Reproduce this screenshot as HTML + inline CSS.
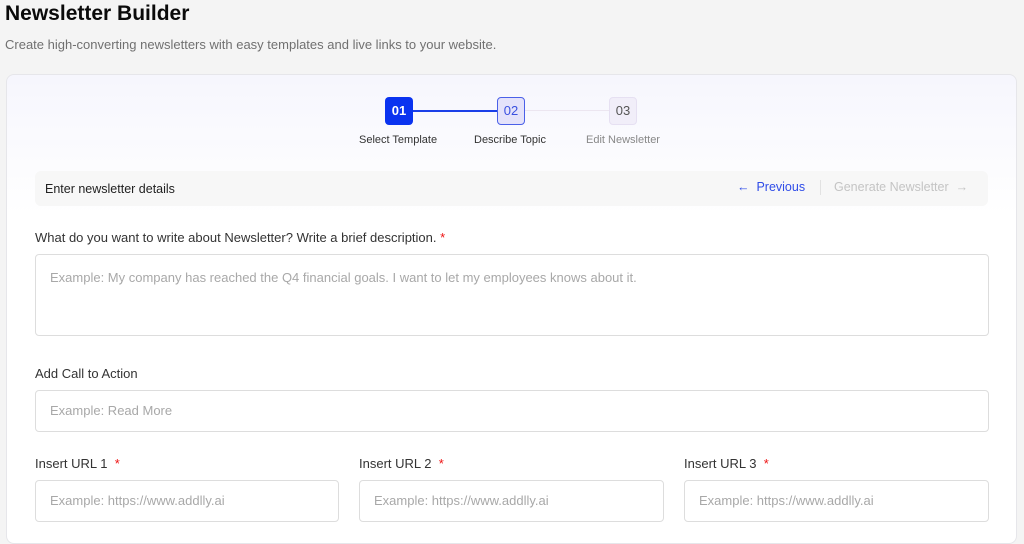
<!DOCTYPE html>
<html><head><meta charset="utf-8"><style>
*{box-sizing:border-box;margin:0;padding:0}
body{width:1024px;height:527px;overflow:hidden;background:#f4f4f4;font-family:"Liberation Sans",sans-serif;position:relative}
.abs{position:absolute}
h1{position:absolute;left:5px;top:2px;font-size:21px;font-weight:bold;color:#0a0a0a}
.sub{left:5px;top:37px;font-size:13px;color:#707070}
.card{left:6px;top:74px;width:1011px;height:470px;background:linear-gradient(#f6f6fd 0px,#fff 140px);border:1px solid #e6e6ea;border-radius:8px}
.step{width:28px;height:28px;border-radius:4px;font-size:13px;text-align:center;line-height:26px;top:97px}
.lbl{font-size:11px;top:134px;color:#333}
.bar{left:35px;top:171px;width:953px;height:35px;background:#f7f7f7;border-radius:6px}
.lab{font-size:13px;color:#333}
.inp{border:1px solid #ddd;border-radius:4px;background:#fff;font-size:13px;color:#a8a8a8;padding-left:14px}
.req{color:#e11}
</style></head><body>
<h1>Newsletter Builder</h1>
<div class="abs sub">Create high-converting newsletters with easy templates and live links to your website.</div>
<div class="abs card"></div>
<div class="abs" style="left:412px;top:110px;width:86px;height:2px;background:#1a3fe8"></div>
<div class="abs" style="left:525px;top:110px;width:85px;height:1px;background:#ece6f0"></div>
<div class="abs step" style="left:385px;background:#0a33f0;color:#fff;font-weight:bold;line-height:28px">01</div>
<div class="abs step" style="left:497px;background:#e4e2fa;border:1px solid #4a60e8;color:#3a50e0">02</div>
<div class="abs step" style="left:609px;background:#f1eef9;border:1px solid #e6e0f2;color:#555">03</div>
<div class="abs lbl" style="left:359px">Select Template</div>
<div class="abs lbl" style="left:474px">Describe Topic</div>
<div class="abs lbl" style="left:586px;color:#888">Edit Newsletter</div>
<div class="abs bar"></div>
<div class="abs" style="left:45px;top:182px;font-size:12.5px;color:#222">Enter newsletter details</div>
<div class="abs" style="left:737px;top:180px;font-size:12.5px;color:#2f4ce8">←&nbsp; Previous</div>
<div class="abs" style="left:820px;top:180px;width:1px;height:15px;background:#e2e2e2"></div>
<div class="abs" style="left:834px;top:180px;font-size:12.5px;color:#c4c4c4">Generate Newsletter &nbsp;→</div>
<div class="abs lab" style="left:35px;top:230px">What do you want to write about Newsletter? Write a brief description. <span class="req">*</span></div>
<div class="abs inp" style="left:35px;top:254px;width:954px;height:82px;padding-top:15px">Example: My company has reached the Q4 financial goals. I want to let my employees knows about it.</div>
<div class="abs lab" style="left:35px;top:366px">Add Call to Action</div>
<div class="abs inp" style="left:35px;top:390px;width:954px;height:42px;line-height:40px">Example: Read More</div>
<div class="abs lab" style="left:35px;top:456px">Insert URL 1 &nbsp;<span class="req">*</span></div>
<div class="abs lab" style="left:359px;top:456px">Insert URL 2 &nbsp;<span class="req">*</span></div>
<div class="abs lab" style="left:684px;top:456px">Insert URL 3 &nbsp;<span class="req">*</span></div>
<div class="abs inp" style="left:35px;top:480px;width:304px;height:42px;line-height:40px">Example: https://www.addlly.ai</div>
<div class="abs inp" style="left:359px;top:480px;width:305px;height:42px;line-height:40px">Example: https://www.addlly.ai</div>
<div class="abs inp" style="left:684px;top:480px;width:305px;height:42px;line-height:40px">Example: https://www.addlly.ai</div>
</body></html>
